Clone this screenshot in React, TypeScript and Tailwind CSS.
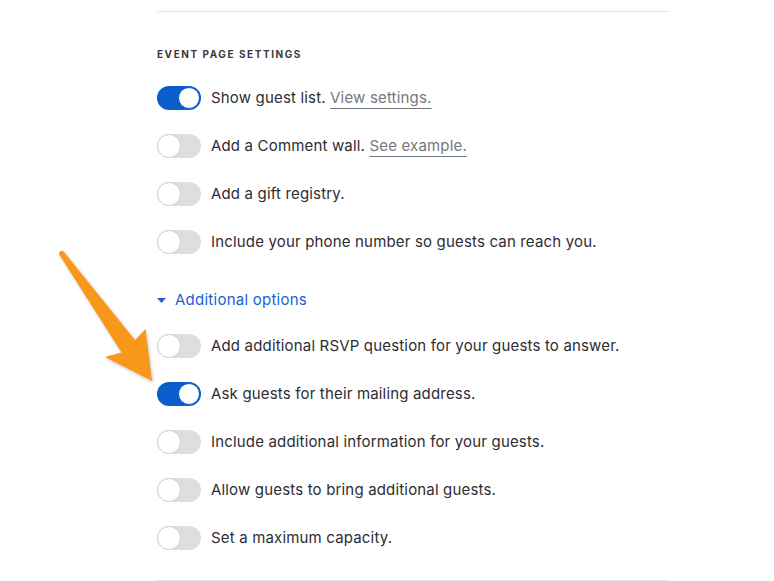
import React from "react";

function Toggle({ on }: { on: boolean }) {
  return on ? (
    <div className="relative h-[24px] w-[44px] shrink-0 rounded-full bg-[#0b5dcc]">
      <div className="absolute right-[1px] top-[1px] h-[22px] w-[22px] rounded-full border border-[#0b5dcc] bg-white" />
    </div>
  ) : (
    <div className="relative h-[24px] w-[44px] shrink-0 rounded-full bg-[#dedede]">
      <div className="absolute left-0 top-0 h-[24px] w-[24px] rounded-full border border-[#d2d2d2] bg-white" />
    </div>
  );
}

function Row({ on, text, link }: { on: boolean; text: string; link?: string }) {
  return (
    <div className="flex h-[48px] items-center gap-[10px]">
      <Toggle on={on} />
      <div className="text-[15px] leading-[20px] tracking-[0.17px] text-[#2d2d33]">
        {text}
        {link && (
          <>
            {" "}
            <span className="text-[#76767f] underline decoration-[#76767f] underline-offset-[5px]">{link}</span>
          </>
        )}
      </div>
    </div>
  );
}

export default function App() {
  return (
    <div className="relative h-[581px] w-[774px] overflow-hidden bg-white" style={{ fontFamily: "Inter, 'Noto Sans', sans-serif" }}>
      <div className="ml-[157px] w-[511px]">
        <div className="mt-[11px] border-t border-[#e2e2e2]" />
        <div className="mt-[34px] h-[16px] text-[10px] font-bold leading-[16px] tracking-[1.55px] text-[#3a3a40]">
          EVENT PAGE SETTINGS
        </div>
        <div className="mt-[12px] flex flex-col">
          <Row on text="Show guest list." link="View settings." />
          <Row on={false} text="Add a Comment wall." link="See example." />
          <Row on={false} text="Add a gift registry." />
          <Row on={false} text="Include your phone number so guests can reach you." />
        </div>
        <div className="mt-[22px] flex h-[24px] items-center gap-[9px] text-[15px] tracking-[0.25px] text-[#1a62d1]">
          <svg width="9" height="5" viewBox="0 0 9 5">
            <path d="M0 0 L9 0 L4.5 5 Z" fill="#1a62d1" />
          </svg>
          <span>Additional options</span>
        </div>
        <div className="mt-[10px] flex flex-col">
          <Row on={false} text="Add additional RSVP question for your guests to answer." />
          <Row on text="Ask guests for their mailing address." />
          <Row on={false} text="Include additional information for your guests." />
          <Row on={false} text="Allow guests to bring additional guests." />
          <Row on={false} text="Set a maximum capacity." />
        </div>
        <div className="mt-[18px] border-t border-[#e2e2e2]" />
      </div>
      <svg className="pointer-events-none absolute left-0 top-0" width="774" height="581" viewBox="0 0 774 581">
        <defs>
          <filter id="sh" x="-20%" y="-20%" width="140%" height="140%">
            <feDropShadow dx="1" dy="1.5" stdDeviation="1.5" floodColor="#000" floodOpacity="0.25" />
          </filter>
        </defs>
        <path
          d="M60 251.5 Q62 250 64 252 L135 340 L145.5 329 L152 381 L105 357 L121.5 352.5 L59.5 255 Q58.5 253 60 251.5 Z"
          fill="#f7971d"
          filter="url(#sh)"
        />
      </svg>
    </div>
  );
}
